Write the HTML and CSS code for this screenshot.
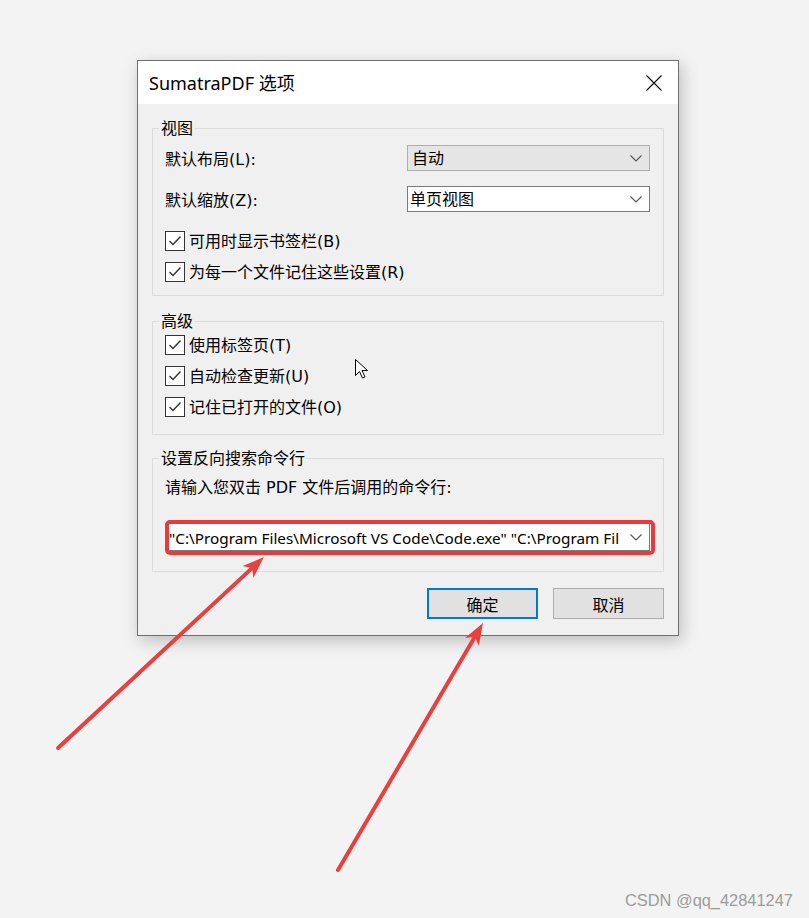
FILE: index.html
```html
<!DOCTYPE html>
<html lang="zh-CN">
<head>
<meta charset="utf-8">
<title>SumatraPDF 选项</title>
<link rel="stylesheet" href="styles.css">
</head>
<body>
<div class="dialog">
  <div class="titlebar">
    <span class="title">SumatraPDF 选项</span>
    <span class="close"><svg width="16" height="16" viewBox="0 0 16 16"><path d="M0.5 0.5L15.5 15.5M15.5 0.5L0.5 15.5" stroke="#000" stroke-width="1.1" fill="none"/></svg></span>
  </div>
  <div class="content">
    <fieldset class="group group-view">
      <legend>视图</legend>
      <div class="field-row">
        <span class="label">默认布局(L):</span>
        <div class="combo combo-list"><span class="combo-text">自动</span><svg class="chevron" width="12" height="7" viewBox="0 0 12 7"><path d="M0.5 0.5L6 6L11.5 0.5" stroke="#555" stroke-width="1.1" fill="none"/></svg></div>
      </div>
      <div class="field-row field-row-2">
        <span class="label">默认缩放(Z):</span>
        <div class="combo combo-edit"><span class="combo-text">单页视图</span><svg class="chevron" width="12" height="7" viewBox="0 0 12 7"><path d="M0.5 0.5L6 6L11.5 0.5" stroke="#555" stroke-width="1.1" fill="none"/></svg></div>
      </div>
      <div class="check-row check-first">
        <span class="checkbox"><svg width="18" height="18" viewBox="0 0 18 18"><path d="M3.5 9L7 12.5L14.5 4.5" stroke="#333" stroke-width="1.4" fill="none"/></svg></span>
        <span class="check-label">可用时显示书签栏(B)</span>
      </div>
      <div class="check-row">
        <span class="checkbox"><svg width="18" height="18" viewBox="0 0 18 18"><path d="M3.5 9L7 12.5L14.5 4.5" stroke="#333" stroke-width="1.4" fill="none"/></svg></span>
        <span class="check-label">为每一个文件记住这些设置(R)</span>
      </div>
    </fieldset>

    <fieldset class="group group-adv">
      <legend>高级</legend>
      <div class="check-row check-first">
        <span class="checkbox"><svg width="18" height="18" viewBox="0 0 18 18"><path d="M3.5 9L7 12.5L14.5 4.5" stroke="#333" stroke-width="1.4" fill="none"/></svg></span>
        <span class="check-label">使用标签页(T)</span>
      </div>
      <div class="check-row">
        <span class="checkbox"><svg width="18" height="18" viewBox="0 0 18 18"><path d="M3.5 9L7 12.5L14.5 4.5" stroke="#333" stroke-width="1.4" fill="none"/></svg></span>
        <span class="check-label">自动检查更新(U)</span>
      </div>
      <div class="check-row">
        <span class="checkbox"><svg width="18" height="18" viewBox="0 0 18 18"><path d="M3.5 9L7 12.5L14.5 4.5" stroke="#333" stroke-width="1.4" fill="none"/></svg></span>
        <span class="check-label">记住已打开的文件(O)</span>
      </div>
    </fieldset>

    <fieldset class="group group-search">
      <legend>设置反向搜索命令行</legend>
      <div class="hint">请输入您双击 PDF 文件后调用的命令行:</div>
      <div class="combo combo-edit combo-cmd"><span class="combo-text">"C:\Program Files\Microsoft VS Code\Code.exe" "C:\Program Files\Microsoft VS Code\resources\app\out\cli.js" --ms-enable-electron-run-as-node -r -g "%f:%l"</span><svg class="chevron" width="12" height="7" viewBox="0 0 12 7"><path d="M0.5 0.5L6 6L11.5 0.5" stroke="#555" stroke-width="1.1" fill="none"/></svg></div>
    </fieldset>

    <div class="buttons">
      <button class="btn btn-default">确定</button>
      <button class="btn">取消</button>
    </div>
  </div>
</div>

<svg class="annotations" width="809" height="918" viewBox="0 0 809 918">
  <g fill="#e8403f" stroke="none">
    <line x1="58" y1="748" x2="252.3" y2="567.9" stroke="#e8403f" stroke-width="4" stroke-linecap="round"/>
    <polygon points="264,557 253.3,577.9 252.3,567.9 242.5,566.1"/>
    <line x1="338" y1="870" x2="474.9" y2="636.8" stroke="#e8403f" stroke-width="4" stroke-linecap="round"/>
    <polygon points="483,623 478.8,646 474.9,636.8 465,637.9"/>
  </g>
  <path d="M355.5 359.5L355.5 375.5L359.5 371.5L362.5 378L365 377L362 370.5L367.5 370.5Z" fill="#fff" stroke="#000" stroke-width="1" stroke-linejoin="miter"/>
</svg>

<div class="watermark">CSDN @qq_42841247</div>
</body>
</html>
```

FILE: styles.css
```css
* { box-sizing: border-box; }

html, body {
  margin: 0;
  padding: 0;
}

body {
  width: 809px;
  height: 918px;
  background: #f3f3f3;
  font-family: "DejaVu Sans", "Noto Sans CJK SC", sans-serif;
  font-size: 16px;
  color: #000;
  position: relative;
  overflow: hidden;
  padding-top: 60px;
}

.dialog {
  margin-left: 137px;
  width: 542px;
  height: 576px;
  border: 1px solid #6f6f6f;
  background: #f0f0f0;
  box-shadow: 3px 5px 16px rgba(0, 0, 0, 0.22);
  display: flex;
  flex-direction: column;
}

.titlebar {
  height: 43px;
  background: #fff;
  display: flex;
  align-items: center;
  justify-content: space-between;
  padding: 0 16px 0 11px;
}

.title {
  font-family: "Noto Sans", "Noto Sans CJK SC", sans-serif;
  font-size: 18px;
  line-height: 24px;
}

.close {
  display: flex;
  width: 16px;
  height: 16px;
}

.content {
  padding: 15px 14px 16px 14px;
  display: flex;
  flex-direction: column;
}

.group {
  margin: 0;
  min-width: 0;
  border: 1px solid #dcdcdc;
  padding: 0 13px 0 12px;
}

.group legend {
  padding: 1px 2px 0;
  margin-left: -6px;
  line-height: 18px;
  font-size: 16px;
}

.group-view {
  padding-top: 7px;
  padding-bottom: 13px;
}

.group-adv {
  margin-top: 16px;
  padding-top: 4px;
  padding-bottom: 17px;
}

.group-search {
  margin-top: 14px;
  padding-top: 10px;
  padding-bottom: 20px;
}

.field-row {
  display: grid;
  grid-template-columns: 1fr 243px;
  align-items: center;
  height: 26px;
}

.field-row-2 {
  margin-top: 15px;
}

.label {
  line-height: 20px;
  padding-top: 3px;
}

.combo {
  height: 26px;
  display: flex;
  align-items: center;
  padding: 0 7px 0 4px;
  border: 1px solid #adadad;
}

.combo-list {
  background: #e5e5e5;
}

.combo-edit {
  background: #fff;
  border-color: #7a7a7a;
  padding-left: 2px;
}

.combo-text {
  flex: 1;
  min-width: 0;
  white-space: nowrap;
  overflow: hidden;
  line-height: 20px;
  padding-top: 1px;
}

.chevron {
  flex: none;
  display: block;
}

.check-row {
  display: flex;
  align-items: center;
  height: 20px;
  margin-top: 11px;
}

.group-view .check-first {
  margin-top: 19px;
}

.group-adv .check-first {
  margin-top: 0;
}

.checkbox {
  width: 20px;
  height: 20px;
  border: 1px solid #333;
  background: #fff;
  display: flex;
  align-items: center;
  justify-content: center;
  flex: none;
}

.check-label {
  margin-left: 4px;
  line-height: 20px;
  padding-top: 2px;
}

.hint {
  line-height: 20px;
}

.combo-cmd {
  position: relative;
  margin-top: 25px;
  height: 28px;
  padding-left: 3px;
}

.combo-cmd .combo-text {
  margin-right: 10px;
  font-family: "Noto Sans", "Noto Sans CJK SC", sans-serif;
  font-size: 15.3px;
}

.combo-cmd::after {
  content: "";
  position: absolute;
  top: -4px;
  left: -1px;
  right: -6px;
  bottom: -5px;
  border: 4px solid #e8393b;
  border-radius: 5px;
}

.buttons {
  margin-top: 16px;
  display: flex;
  justify-content: flex-end;
  gap: 15px;
}

.btn {
  width: 111px;
  height: 31px;
  background: #e1e1e1;
  border: 1px solid #adadad;
  font-family: inherit;
  font-size: 16px;
  color: #000;
  padding: 0;
  margin: 0;
}

.btn-default {
  border: 2px solid #0078d7;
}

.annotations {
  position: absolute;
  left: 0;
  top: 0;
  pointer-events: none;
}

.watermark {
  position: absolute;
  left: 625px;
  top: 891px;
  font-family: "Liberation Sans", Arial, sans-serif;
  font-size: 16.4px;
  color: #9c9c9c;
  white-space: nowrap;
}
```
